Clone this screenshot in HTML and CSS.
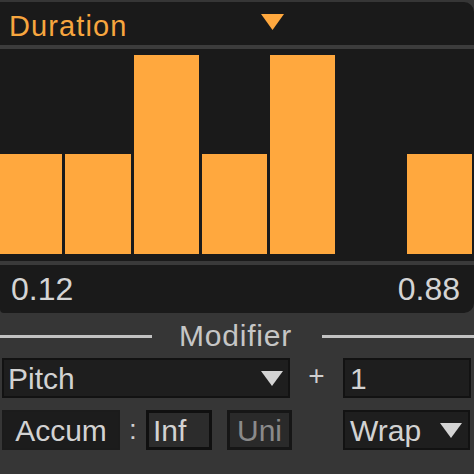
FILE: index.html
```html
<!DOCTYPE html>
<html>
<head>
<meta charset="utf-8">
<link rel="stylesheet" href="styles.css">
</head>
<body>
<div class="app">
  <div class="panel">
    <div class="header">
      <span class="dur-label">Duration</span>
      <svg class="tri" width="23" height="16" viewBox="0 0 23 16"><polygon points="0,0 23,0 11.5,16" fill="#ffa83e"/></svg>
    </div>
    <div class="sep"></div>
    <div class="bars">
      <div class="bar" style="height:100px"></div>
      <div class="bar" style="height:100px"></div>
      <div class="bar" style="height:199px"></div>
      <div class="bar" style="height:100px"></div>
      <div class="bar" style="height:199px"></div>
      <div class="bar" style="height:0px"></div>
      <div class="bar" style="height:100px"></div>
    </div>
    <div class="sep2"></div>
    <div class="values">
      <span>0.12</span>
      <span>0.88</span>
    </div>
  </div>
  <div class="mod-title">
    <div class="rule"></div>
    <span class="mod-label">Modifier</span>
    <div class="rule"></div>
  </div>
  <div class="row row1">
    <div class="box dropdown pitch">
      <span>Pitch</span>
      <svg class="dtri" width="22" height="15" viewBox="0 0 22 15"><polygon points="0,0 22,0 11,15" fill="#d4d4d4"/></svg>
    </div>
    <div class="op plus">+</div>
    <div class="box num">1</div>
  </div>
  <div class="row row2">
    <div class="box accum">Accum</div>
    <div class="op colon">:</div>
    <div class="box field inf">Inf</div>
    <div class="box field uni">Uni</div>
    <div class="box dropdown wrap">
      <span>Wrap</span>
      <svg class="dtri" width="22" height="15" viewBox="0 0 22 15"><polygon points="0,0 22,0 11,15" fill="#d4d4d4"/></svg>
    </div>
  </div>
</div>
</body>
</html>
```

FILE: styles.css
```css
html, body {
  margin: 0;
  padding: 0;
}
body {
  background: #363636;
  width: 474px;
  height: 474px;
  overflow: hidden;
  font-family: "Liberation Sans", Arial, sans-serif;
}
.app {
  width: 474px;
  height: 474px;
  padding-top: 2px;
  box-sizing: border-box;
}
.panel {
  background: #1a1a1a;
  border-radius: 0 10px 10px 4px;
  overflow: hidden;
  height: 311px;
}
.header {
  height: 43px;
  display: flex;
  align-items: center;
  padding-left: 9px;
}
.dur-label {
  width: 252px;
  color: #f7a63f;
  font-size: 29px;
  letter-spacing: 1.1px;
  line-height: 43px;
  padding-top: 5px;
}
.tri {
  display: block;
  margin-top: -4px;
}
.sep {
  height: 4px;
  background: #3c3c3c;
}
.bars {
  height: 205px;
  padding-bottom: 7px;
  margin-left: -3px;
  width: 475px;
  display: grid;
  grid-template-columns: repeat(7, 1fr);
  column-gap: 3px;
  align-items: end;
}
.bar {
  background: #ffa83e;
}
.sep2 {
  height: 4px;
  background: #3a3a3a;
}
.values {
  height: 48px;
  display: flex;
  justify-content: space-between;
  align-items: center;
  padding: 0 14px 0 11px;
  color: #d4d4d4;
  font-size: 32px;
}
.mod-title {
  height: 44px;
  display: flex;
  align-items: center;
  margin-top: 1px;
}
.rule {
  height: 3px;
  background: #c2c2c2;
  flex: 1;
}
.mod-label {
  color: #c6c6c6;
  font-size: 30px;
  letter-spacing: 0.8px;
  padding: 0 30px 0 27px;
}
.row {
  display: flex;
  align-items: center;
  padding-left: 2px;
  height: 40px;
}
.row1 {
  margin-top: 0;
}
.row2 {
  margin-top: 12px;
}
.box {
  height: 40px;
  box-sizing: border-box;
  display: flex;
  align-items: center;
  color: #d2d2d2;
  font-size: 30px;
  background: #1e1e1e;
  border: 2px solid #121212;
  padding-top: 2px;
}
.pitch {
  width: 288px;
  padding-left: 4px;
  justify-content: space-between;
  padding-right: 5px;
}
.op {
  color: #cfcfcf;
  font-size: 28px;
  text-align: center;
}
.plus {
  width: 53px;
  margin-top: -4px;
}
.num {
  width: 128px;
  padding-left: 5px;
}
.accum {
  width: 118px;
  justify-content: center;
  border-color: #1b1b1b;
  background: #1c1c1c;
}
.colon {
  width: 26px;
}
.field {
  border: 3px solid #101010;
  background: #2c2c2c;
}
.inf {
  width: 66px;
  padding-left: 4px;
}
.uni {
  width: 65px;
  margin-left: 15px;
  justify-content: center;
  color: #8a8a8a;
  border-color: #161616;
  background: #2a2a2a;
}
.wrap {
  width: 127px;
  margin-left: 51px;
  padding-left: 5px;
  padding-right: 6px;
  justify-content: space-between;
}
.dtri {
  display: block;
  margin-top: -2px;
}
```
